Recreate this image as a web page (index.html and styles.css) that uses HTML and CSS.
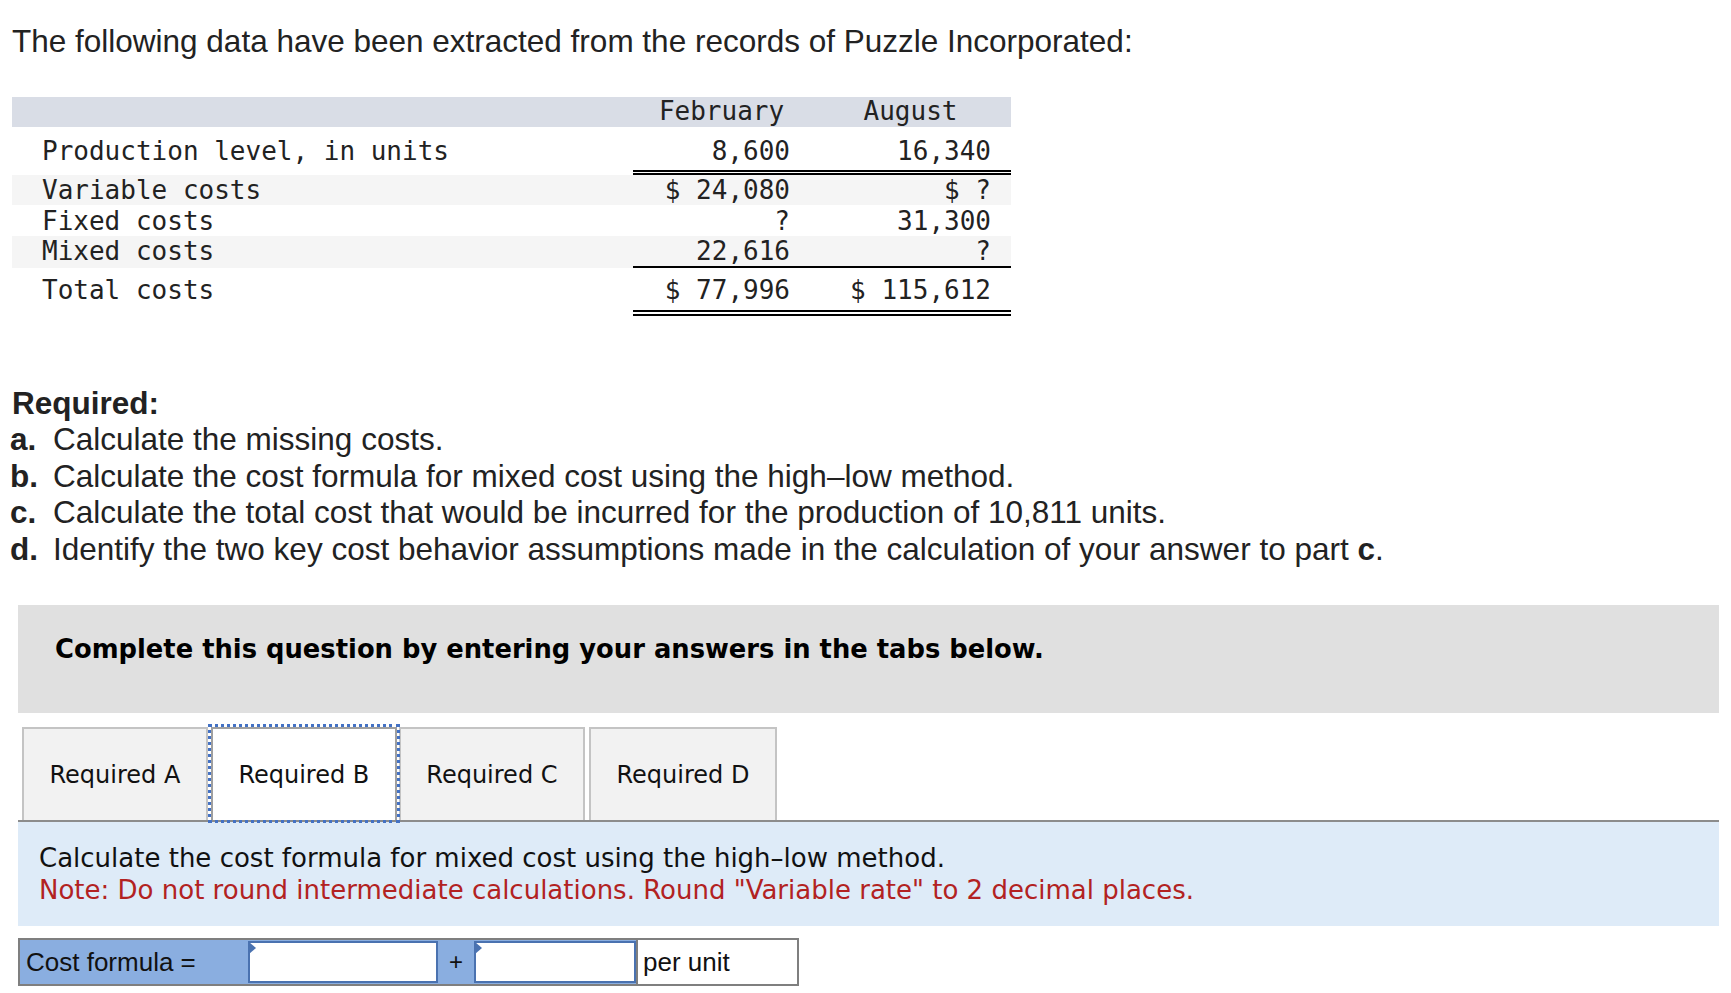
FILE: index.html
```html
<!DOCTYPE html>
<html lang="en">
<head>
<meta charset="utf-8">
<title>Puzzle Incorporated</title>
<link rel="stylesheet" href="styles.css">
</head>
<body>
<div class="page">
  <p class="intro">The following data have been extracted from the records of Puzzle Incorporated:</p>

  <table class="data">
    <colgroup>
      <col class="c-label"><col class="c-feb"><col class="c-aug">
    </colgroup>
    <thead>
      <tr class="head"><th></th><th>February</th><th>August</th></tr>
    </thead>
    <tbody>
      <tr class="r-prod"><td class="lbl">Production level, in units</td><td class="num dbl">8,600</td><td class="num dbl">16,340</td></tr>
      <tr class="r-std stripe"><td class="lbl">Variable costs</td><td class="num">$ 24,080</td><td class="num">$ ?</td></tr>
      <tr class="r-fixed"><td class="lbl">Fixed costs</td><td class="num">?</td><td class="num">31,300</td></tr>
      <tr class="r-mixed stripe"><td class="lbl">Mixed costs</td><td class="num sgl">22,616</td><td class="num sgl">?</td></tr>
      <tr class="r-total"><td class="lbl">Total costs</td><td class="num dbl2">$ 77,996</td><td class="num dbl2">$ 115,612</td></tr>
    </tbody>
  </table>

  <div class="required">
    <div class="req-title">Required:</div>
    <div class="req-item"><span class="req-key">a.</span><span>Calculate the missing costs.</span></div>
    <div class="req-item"><span class="req-key">b.</span><span>Calculate the cost formula for mixed cost using the high–low method.</span></div>
    <div class="req-item"><span class="req-key">c.</span><span>Calculate the total cost that would be incurred for the production of 10,811 units.</span></div>
    <div class="req-item"><span class="req-key">d.</span><span>Identify the two key cost behavior assumptions made in the calculation of your answer to part <b>c</b>.</span></div>
  </div>

  <div class="question">
    <div class="banner">Complete this question by entering your answers in the tabs below.</div>

    <div class="tabs">
      <div class="tab">Required A</div>
      <div class="tab active">Required B</div>
      <div class="tab">Required C</div>
      <div class="tab">Required D</div>
    </div>

    <div class="panel">
      <div class="panel-text">Calculate the cost formula for mixed cost using the high–low method.</div>
      <div class="panel-note">Note: Do not round intermediate calculations. Round "Variable rate" to 2 decimal places.</div>
    </div>

    <div class="formula">
      <div class="f-label">Cost formula =</div>
      <div class="f-input f-in1"></div>
      <div class="f-plus">+</div>
      <div class="f-input f-in2"></div>
      <div class="f-unit">per unit</div>
    </div>
  </div>
</div>
</body>
</html>
```

FILE: styles.css
```css
* { box-sizing: border-box; }

body {
  margin: 0;
  background: #ffffff;
  color: #222222;
  font-family: "Liberation Sans", Arial, sans-serif;
}

.page {
  padding: 23px 12px 0 12px;
}

.intro {
  margin: 0;
  font-size: 31.5px;
  line-height: 36px;
}

/* data table */
.data {
  margin-top: 38px;
  border-collapse: separate;
  border-spacing: 0;
  width: 999px;
  table-layout: fixed;
  font-family: "DejaVu Sans Mono", monospace;
  font-size: 26px;
  color: #222;
}
.c-label { width: 621px; }
.c-feb { width: 177px; }
.c-aug { width: 201px; }

.data th, .data td {
  padding: 0;
  font-weight: normal;
  white-space: nowrap;
  line-height: 28px;
  vertical-align: middle;
}
.data .head { background: #d9dde6; }
.data .head th { text-align: center; height: 29px; padding-bottom: 2px; }
.data .stripe { background: #f5f5f5; }
.data .lbl { padding-left: 30px; }
.data .num { text-align: right; padding-right: 20px; }

.r-prod td { height: 48px; padding-top: 4px; }
.r-prod td.lbl { padding-bottom: 5px; }
.r-std td { height: 30px; }
.r-fixed td { height: 31px; }
.r-mixed td { height: 32px; }
.r-mixed td.lbl { padding-bottom: 2px; }
.r-total td { height: 48px; padding-top: 1px; }
.r-total td.lbl { padding-bottom: 6px; }

.data .dbl { border-bottom: 5px double #000; }
.data .sgl { border-bottom: 2px solid #000; }
.data .dbl2 { border-bottom: 6px double #000; }

/* required */
.required {
  margin-top: 69px;
  font-size: 31.5px;
  line-height: 36.4px;
  color: #222;
}
.req-title { font-weight: bold; }
.req-item { display: flex; margin-left: -2px; }
.req-key { font-weight: bold; width: 43px; flex: none; }

/* question area */
.question {
  margin-top: 38px;
  margin-left: 6px;
}

.banner {
  background: #e0e0e0;
  height: 108px;
  padding: 29px 0 0 37px;
  line-height: 30px;
  font-family: "DejaVu Sans", Verdana, sans-serif;
  font-weight: bold;
  font-size: 25.8px;
  color: #000;
}

.tabs {
  margin-top: 14px;
  display: flex;
  align-items: flex-end;
  padding-left: 4px;
  border-bottom: 2px solid #8c8c8c;
}
.tab {
  height: 93px;
  display: flex;
  align-items: center;
  padding: 0 25.5px;
  background: #f2f2f2;
  border: 2px solid #c4c4c4;
  border-bottom: none;
  font-family: "DejaVu Sans", Verdana, sans-serif;
  font-size: 24px;
  color: #111;
  margin-right: 4px;
}
.tab.active {
  background: #ffffff;
  border-color: #a0a0a0;
  outline: 3px dotted #4472c4;
  margin-left: -1px;
  margin-right: 2px;
  position: relative;
  z-index: 1;
}

.panel {
  background: #deebf8;
  padding: 20px 21px;
  font-family: "DejaVu Sans", Verdana, sans-serif;
  font-size: 26px;
  line-height: 32px;
  color: #111;
}
.panel-note { color: #b22222; }

.formula {
  margin-top: 12px;
  width: 781px;
  height: 48px;
  display: flex;
  border: 2px solid #7f7f7f;
  background: #8aaee0;
  font-family: "Liberation Sans", Arial, sans-serif;
  font-size: 26px;
  color: #111;
}
.f-label {
  width: 228px;
  display: flex;
  align-items: center;
  padding-left: 6px;
}
.f-input {
  position: relative;
  background: #fff;
  border: 2px solid #4a72b0;
  margin: 1px 0;
}
.f-input::before {
  content: "";
  position: absolute;
  left: -1px;
  top: -1px;
  border-left: 7px solid #4a72b0;
  border-top: 6px solid transparent;
  border-bottom: 6px solid transparent;
}
.f-in1 { width: 190px; }
.f-in2 { width: 162px; }
.f-plus {
  width: 36px;
  display: flex;
  align-items: center;
  justify-content: center;
  font-size: 24px;
}
.f-unit {
  flex: 1;
  background: #fff;
  border-left: 2px solid #7f7f7f;
  display: flex;
  align-items: center;
  padding-left: 5px;
}
```
